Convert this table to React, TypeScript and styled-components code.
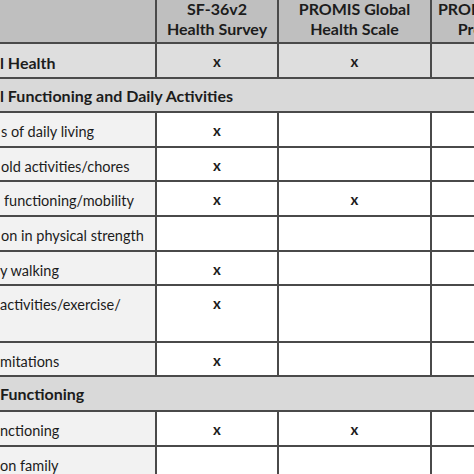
import React from "react";
import styled, { createGlobalStyle } from "styled-components";

const Global = createGlobalStyle`
  html, body { margin: 0; padding: 0; background: #ffffff; overflow: hidden; }
  body { font-family: Lato, "Open Sans", "DejaVu Sans", sans-serif; color: #1c1c1c; }
`;

const Viewport = styled.div`
  width: 474px;
  height: 474px;
  overflow: hidden;
`;

const Table = styled.table`
  border-collapse: collapse;
  table-layout: fixed;
  width: 531px;
  margin-top: -1px;
`;

const Col = styled.col<{ $w: number }>`
  width: ${(p) => p.$w}px;
`;

const HeadCell = styled.th<{ $first?: boolean }>`
  background: #bfbfbf;
  border: 2px solid #4a4a4a;
  border-top: none;
  ${(p) => (p.$first ? "border-left: none;" : "")}
  font-weight: 700;
  font-size: 16px;
  line-height: 20px;
  text-align: center;
  padding: 0 0 3px;
  white-space: nowrap;
  overflow: hidden;
`;

const SectionCell = styled.td`
  background: #d9d9d9;
  border: 2px solid #4a4a4a;
  border-left: none;
  border-right: none;
  font-weight: 700;
  font-size: 16px;
  line-height: 22px;
  padding: 6px 0 4.6px 0;
  white-space: nowrap;
`;

const LabelCell = styled.td<{ $tone: "summary" | "item"; $indent: number; $lines: number }>`
  background: ${(p) => (p.$tone === "summary" ? "#dedede" : "#f2f2f2")};
  border: 2px solid #4a4a4a;
  border-left: none;
  font-weight: ${(p) => (p.$tone === "summary" ? 700 : 400)};
  font-size: ${(p) => (p.$tone === "summary" ? "16px" : "14.5px")};
  line-height: 22px;
  height: ${(p) => p.$lines * 22}px;
  padding: 8px 0 2.6px ${(p) => p.$indent}px;
  vertical-align: top;
  white-space: nowrap;
  overflow: hidden;
`;

const MarkCell = styled.td<{ $tone: "summary" | "item" }>`
  background: ${(p) => (p.$tone === "summary" ? "#dedede" : "#ffffff")};
  border: 2px solid #4a4a4a;
  font-size: 15px;
  font-weight: 700;
  line-height: 22px;
  text-align: center;
  vertical-align: top;
  padding: 6px 0 4.6px;
`;

type Row =
  | { kind: "section"; label: string }
  | { kind: "item" | "summary"; label: string; marks: boolean[]; indent?: number; lines?: number };

const rows: Row[] = [
  { kind: "summary", label: "l Health", marks: [true, true, false] },
  { kind: "section", label: "l Functioning and Daily Activities" },
  { kind: "item", label: "s of daily living", marks: [true, false, false], indent: 1 },
  { kind: "item", label: "old activities/chores", marks: [true, false, false], indent: 1 },
  { kind: "item", label: "functioning/mobility", marks: [true, true, false], indent: 4 },
  { kind: "item", label: "on in physical strength", marks: [false, false, false], indent: 1 },
  { kind: "item", label: "y walking", marks: [true, false, false] },
  { kind: "item", label: "activities/exercise/", marks: [true, false, false], lines: 2 },
  { kind: "item", label: "mitations", marks: [true, false, false] },
  { kind: "section", label: "Functioning" },
  { kind: "item", label: "nctioning", marks: [true, true, false] },
  { kind: "item", label: "on family", marks: [false, false, false], lines: 2 },
];

const headers = [
  ["SF-36v2", "Health Survey"],
  ["PROMIS Global", "Health Scale"],
  ["PROMIS-29", "Profile"],
];

const widths = [156, 122, 153, 100];

export default function App() {
  return (
    <Viewport>
      <Global />
      <Table>
        <colgroup>
          {widths.map((w, i) => (
            <Col key={i} $w={w} />
          ))}
        </colgroup>
        <thead>
          <tr>
            <HeadCell $first />
            {headers.map((h) => (
              <HeadCell key={h[0]}>
                {h[0]}
                <br />
                {h[1]}
              </HeadCell>
            ))}
          </tr>
        </thead>
        <tbody>
          {rows.map((r, i) =>
            r.kind === "section" ? (
              <tr key={i}>
                <SectionCell colSpan={4}>{r.label}</SectionCell>
              </tr>
            ) : (
              <tr key={i}>
                <LabelCell $tone={r.kind} $indent={r.indent ?? 0} $lines={r.lines ?? 1}>
                  {r.label}
                </LabelCell>
                {r.marks.map((m, j) => (
                  <MarkCell key={j} $tone={r.kind}>
                    {m ? "x" : ""}
                  </MarkCell>
                ))}
              </tr>
            )
          )}
        </tbody>
      </Table>
    </Viewport>
  );
}
